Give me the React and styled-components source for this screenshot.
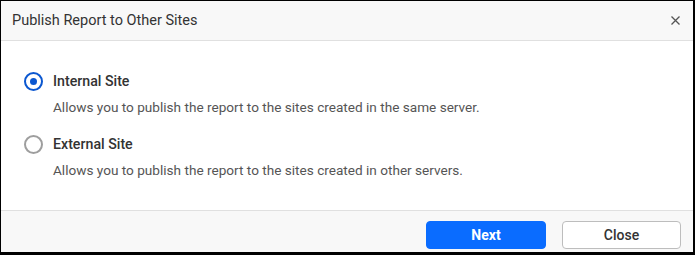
import React, { useState } from "react";
import styled, { createGlobalStyle } from "styled-components";

const Global = createGlobalStyle`
  html, body { margin: 0; padding: 0; background: #fff; }
  body { font-family: Roboto, "Noto Sans", Arial, sans-serif; }
  * { box-sizing: border-box; }
`;

const Dialog = styled.div`
  width: 695px;
  height: 255px;
  border-style: solid;
  border-color: #000;
  border-width: 1px 2px 3px 1px;
  display: flex;
  flex-direction: column;
  background: #fff;
`;

const Header = styled.div`
  height: 40px;
  flex: none;
  display: flex;
  align-items: center;
  justify-content: space-between;
  padding: 0 10px 0 11px;
  background: #f8f8f8;
  border-bottom: 1px solid #e0e0e0;
`;

const Title = styled.div`
  font-size: 14.5px;
  color: #333;
  font-weight: 400;
`;

const CloseIcon = styled.button`
  width: 16px;
  height: 16px;
  border: none;
  background: none;
  padding: 0;
  display: flex;
  align-items: center;
  justify-content: center;
  color: #555;
`;

const Body = styled.div`
  flex: 1;
  padding: 31px 22px 0 23px;
  display: flex;
  flex-direction: column;
  gap: 19px;
`;

const Option = styled.label`
  display: grid;
  grid-template-columns: 19px 1fr;
  column-gap: 10px;
  row-gap: 8px;
  cursor: pointer;
`;

const Radio = styled.span`
  width: 19px;
  height: 19px;
  border-radius: 50%;
  border: 2px solid ${(p) => (p.$checked ? "#0b57d0" : "#9e9e9e")};
  display: flex;
  align-items: center;
  justify-content: center;
  &::after {
    content: "";
    width: 7px;
    height: 7px;
    border-radius: 50%;
    background: ${(p) => (p.$checked ? "#0b57d0" : "transparent")};
  }
`;

const Label = styled.span`
  font-size: 14.2px;
  font-weight: 500;
  color: #333;
  line-height: 19px;
`;

const Desc = styled.span`
  grid-column: 2;
  font-size: 13.6px;
  color: #555;
  line-height: 17px;
`;

const Footer = styled.div`
  height: 42px;
  flex: none;
  background: #f8f8f8;
  border-top: 1px solid #e0e0e0;
  display: flex;
  justify-content: flex-end;
  align-items: flex-start;
  padding: 10px 12px 0 0;
  gap: 16px;
`;

const Button = styled.button`
  height: 28px;
  width: ${(p) => (p.$primary ? "120px" : "119px")};
  border-radius: 4px;
  font-family: Roboto, Arial, sans-serif;
  font-size: 14px;
  font-weight: ${(p) => (p.$primary ? 700 : 500)};
  color: ${(p) => (p.$primary ? "#fff" : "#333")};
  background: ${(p) => (p.$primary ? "#0a6cff" : "#fff")};
  border: 1px solid ${(p) => (p.$primary ? "#0a6cff" : "#bdbdbd")};
  cursor: pointer;
`;

const options = [
  {
    id: "internal",
    label: "Internal Site",
    desc: "Allows you to publish the report to the sites created in the same server.",
  },
  {
    id: "external",
    label: "External Site",
    desc: "Allows you to publish the report to the sites created in other servers.",
  },
];

export default function App() {
  const [sel, setSel] = useState("internal");
  return (
    <>
      <Global />
      <Dialog>
        <Header>
          <Title>Publish Report to Other Sites</Title>
          <CloseIcon aria-label="close">
            <svg width="9" height="9" viewBox="0 0 9 9">
              <path d="M0.5 0.5 L8.5 8.5 M8.5 0.5 L0.5 8.5" stroke="currentColor" strokeWidth="1.3" />
            </svg>
          </CloseIcon>
        </Header>
        <Body>
          {options.map((o) => (
            <Option key={o.id} onClick={() => setSel(o.id)}>
              <Radio $checked={sel === o.id} />
              <Label>{o.label}</Label>
              <Desc>{o.desc}</Desc>
            </Option>
          ))}
        </Body>
        <Footer>
          <Button $primary>Next</Button>
          <Button>Close</Button>
        </Footer>
      </Dialog>
    </>
  );
}
